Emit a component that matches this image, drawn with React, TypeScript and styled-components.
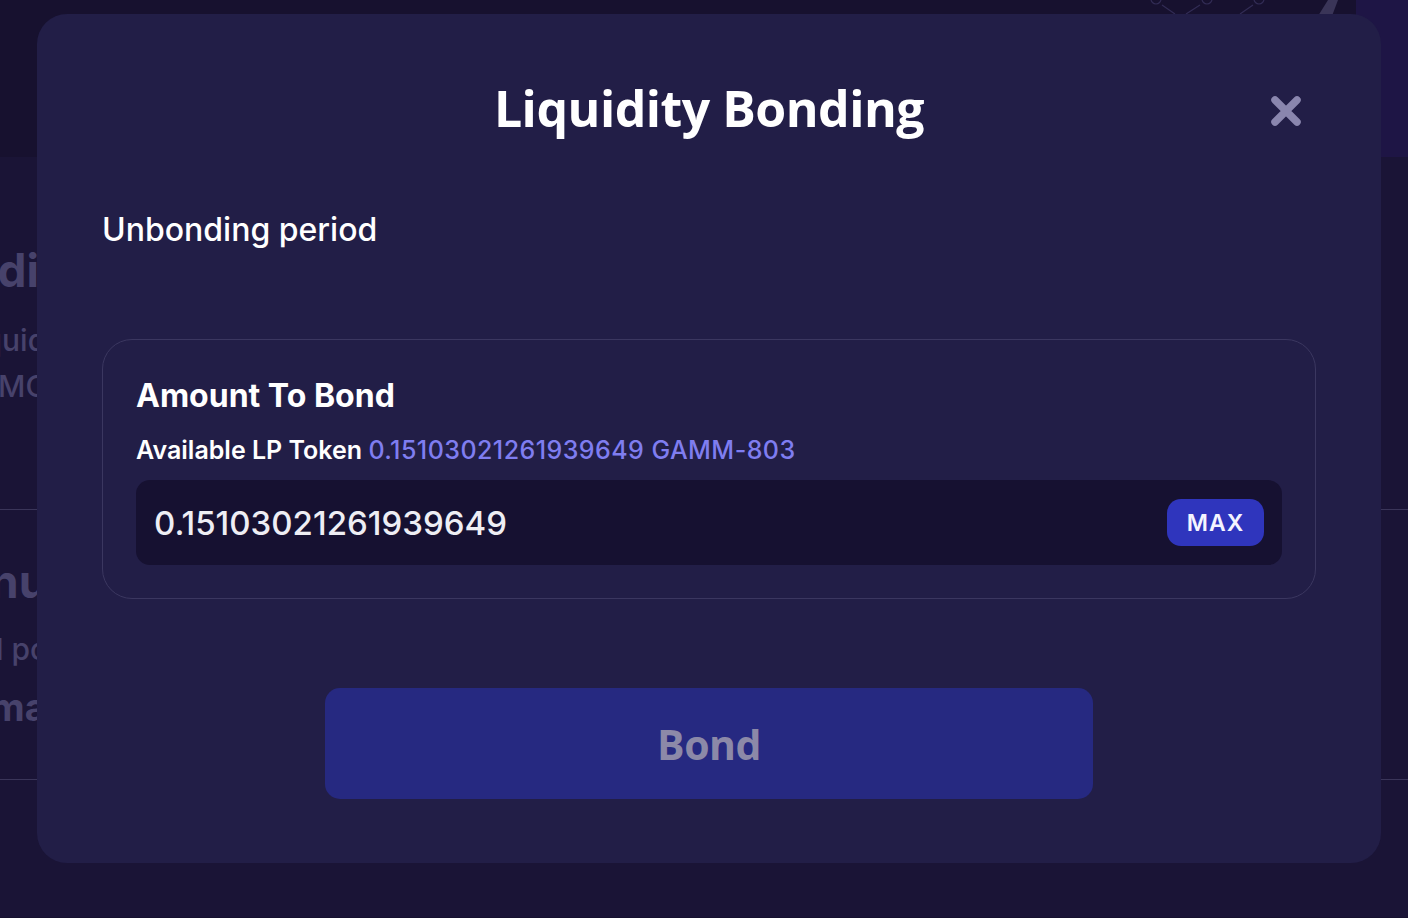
import React from 'react'
import styled, { createGlobalStyle } from 'styled-components'

const GlobalStyle = createGlobalStyle`
  html, body {
    margin: 0;
    padding: 0;
    background: #16112f;
    font-family: Inter, "Noto Sans", sans-serif;
    overflow: hidden;
  }
  * { box-sizing: border-box; }
`

const dim = '#47426b'
const line = '#3a3559'

const Page = styled.div`
  position: relative;
  width: 1408px;
  height: 918px;
  background: #16112f;
  overflow: hidden;
`

const Hero = styled.div`
  height: 157px;
  display: flex;
  justify-content: flex-end;
  background: #17112f;
`

const HeroArt = styled.div`
  width: 52px;
  background: #1e1545;
  position: relative;
`

const Body = styled.div`
  background: #1a1436;
  display: flex;
  flex-direction: column;
  padding-bottom: 137px;
`

const Section = styled.div<{ height: number }>`
  height: ${props => props.height}px;
  border-bottom: 1.5px solid ${line};
  display: flex;
  flex-direction: column;
  overflow: hidden;
`

const GhostText = styled.div<{ size: number, weight?: number, shift: number, top: number }>`
  font-size: ${props => props.size}px;
  font-weight: ${props => props.weight || 500};
  color: ${dim};
  white-space: nowrap;
  margin-left: ${props => props.shift}px;
  margin-top: ${props => props.top}px;
  line-height: 1.2;
`

const Overlay = styled.div`
  position: absolute;
  top: 14px;
  left: 37px;
  width: 1344px;
  height: 849px;
  background: #221e47;
  border-radius: 30px;
  padding: 62px 65px 64px;
  display: flex;
  flex-direction: column;
`

const Header = styled.div`
  display: grid;
  grid-template-columns: 1fr auto 1fr;
  align-items: center;
`

const Title = styled.h1`
  grid-column: 2;
  margin: 0;
  font-family: "Open Sans", sans-serif;
  font-size: 50px;
  font-weight: 700;
  letter-spacing: -0.5px;
  color: #fff;
  line-height: 1.3;
`

const Close = styled.button`
  justify-self: end;
  margin-right: 14px;
  margin-top: 4px;
  width: 32px;
  height: 32px;
  padding: 0;
  border: none;
  background: none;
  display: flex;
  align-items: center;
  justify-content: center;
  cursor: pointer;
`

const Label = styled.div`
  margin-top: 70px;
  font-size: 32px;
  font-weight: 500;
  color: #fff;
  line-height: 1.2;
`

const Box = styled.div`
  margin-top: 90px;
  border: 1.5px solid #3b3760;
  border-radius: 30px;
  padding: 37px 33px 33px;
  display: flex;
  flex-direction: column;
`

const BoxTitle = styled.div`
  font-size: 32px;
  font-weight: 700;
  color: #fff;
  line-height: 1.2;
`

const Available = styled.div`
  margin-top: 18px;
  font-size: 25px;
  font-weight: 600;
  color: #fff;
  line-height: 1.3;
  span { color: #7f7df0; font-weight: 500; letter-spacing: 0.45px; }
`

const InputRow = styled.div`
  margin-top: 14px;
  height: 85px;
  background: #161131;
  border-radius: 14px;
  display: flex;
  align-items: center;
  padding: 0 18px;
`

const Amount = styled.input`
  flex: 1;
  background: transparent;
  border: none;
  outline: none;
  color: #eeeef4;
  font-family: Inter, sans-serif;
  font-size: 33px;
  font-weight: 500;
  padding: 0;
`

const MaxButton = styled.button`
  width: 97px;
  height: 47px;
  border: none;
  border-radius: 14px;
  background: #2f35bd;
  color: #f4f4ff;
  font-family: Inter, sans-serif;
  font-size: 23px;
  font-weight: 600;
  letter-spacing: 1px;
`

const BondButton = styled.button`
  align-self: center;
  margin-top: 89px;
  width: 768px;
  height: 111px;
  border: none;
  border-radius: 15px;
  background: #262981;
  color: #8c89a8;
  font-family: "Open Sans", sans-serif;
  font-size: 41px;
  font-weight: 700;
  letter-spacing: -0.5px;
`

const CloseIcon = () => (
  <svg width="32" height="32" viewBox="0 0 32 32">
    <path d="M5 5 L27 27 M27 5 L5 27" stroke="#8a86ae" strokeWidth="7.5" strokeLinecap="round" />
  </svg>
)

const HeroDecor = () => (
  <svg width="260" height="16" viewBox="0 0 260 16" style={{ position: 'absolute', right: 0, top: 0 }}>
    <g stroke="#322c55" strokeWidth="1.2" fill="none">
      <circle cx="8" cy="-1" r="5" />
      <circle cx="59" cy="-1" r="5" />
      <circle cx="111" cy="-1" r="5" />
      <path d="M14 5 L27 14 M52 5 L38 14 M105 5 L92 14" />
    </g>
    <path d="M170 16 L180 0 L190 0 L184 16 Z" fill="#3a3558" />
  </svg>
)

export default function App() {
  return (
    <>
      <GlobalStyle />
      <Page>
        <Hero>
          <HeroArt>
            <HeroDecor />
          </HeroArt>
        </Hero>
        <Body>
          <Section height={353}>
            <GhostText size={46} weight={700} shift={-111} top={86}>Liquidity</GhostText>
            <GhostText size={30} shift={-41} top={24}>Liquidity</GhostText>
            <GhostText size={30} shift={-2} top={10}>MOCK</GhostText>
          </Section>
          <Section height={270}>
            <GhostText size={46} weight={700} shift={-10} top={44}>nu</GhostText>
            <GhostText size={30} shift={-4} top={22}>l pool</GhostText>
            <GhostText size={38} weight={700} shift={-10} top={18}>max</GhostText>
          </Section>
        </Body>
        <Overlay>
          <Header>
            <Title>Liquidity Bonding</Title>
            <Close aria-label="close">
              <CloseIcon />
            </Close>
          </Header>
          <Label>Unbonding period</Label>
          <Box>
            <BoxTitle>Amount To Bond</BoxTitle>
            <Available>
              Available LP Token <span>0.15103021261939649 GAMM-803</span>
            </Available>
            <InputRow>
              <Amount defaultValue="0.15103021261939649" />
              <MaxButton>MAX</MaxButton>
            </InputRow>
          </Box>
          <BondButton>Bond</BondButton>
        </Overlay>
      </Page>
    </>
  )
}
